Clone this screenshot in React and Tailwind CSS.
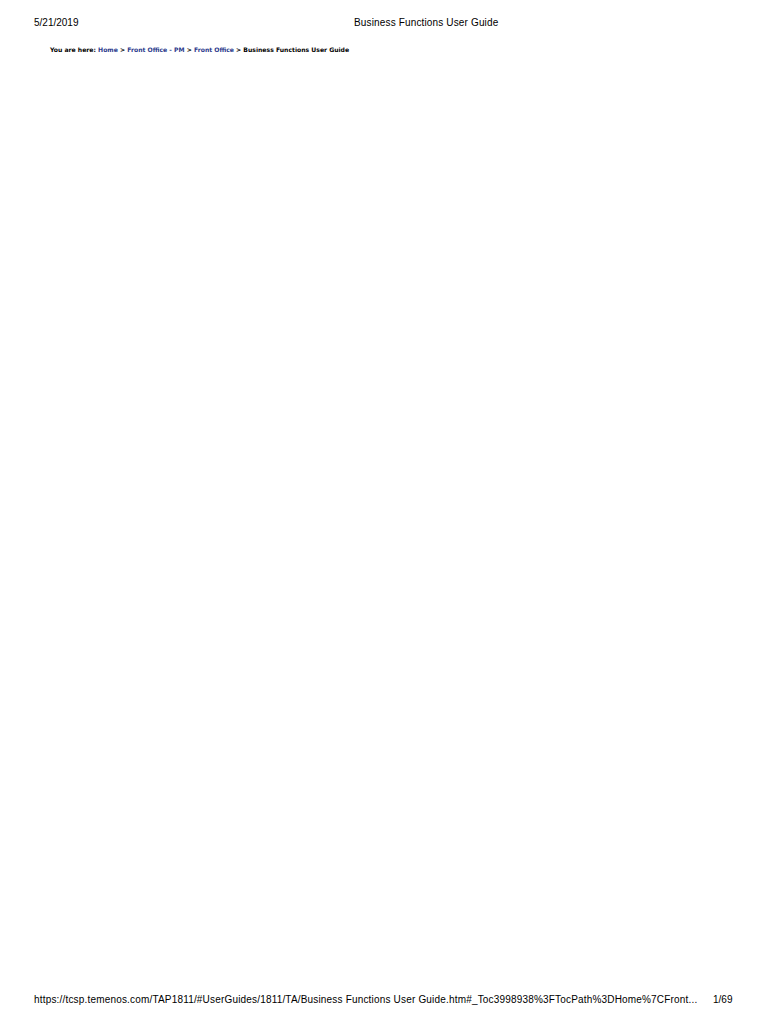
export default function App() {
  return (
    <div className="w-[768px] h-[1024px] bg-white relative flex flex-col" style={{ fontFamily: '"Liberation Sans", Arial, sans-serif' }}>
      <div className="flex h-[18px] mt-[14px] px-[34px] text-[10px] leading-[18px] text-black">
        <div className="w-[320px]">5/21/2019</div>
        <div className="tracking-[0.15px]">Business Functions User Guide</div>
      </div>
      <div className="mt-[13px] ml-[50px] text-[6.1px] leading-[10px] font-bold whitespace-nowrap" style={{ fontFamily: '"DejaVu Sans", Verdana, sans-serif' }}>
        <span className="text-black">You are here: </span>
        <span className="text-[#2b3a8c]">Home</span>
        <span className="text-black"> &gt; </span>
        <span className="text-[#2b3a8c]">Front Office - PM</span>
        <span className="text-black"> &gt; </span>
        <span className="text-[#2b3a8c]">Front Office</span>
        <span className="text-black"> &gt; Business Functions User Guide</span>
      </div>
      <div className="flex-1" />
      <div className="flex h-[18px] mb-[15px] px-[34px] text-[10px] leading-[18px] text-black">
        <div className="w-[679px] whitespace-nowrap tracking-[0.18px]">https://tcsp.temenos.com/TAP1811/#UserGuides/1811/TA/Business Functions User Guide.htm#_Toc3998938%3FTocPath%3DHome%7CFront...</div>
        <div>1/69</div>
      </div>
    </div>
  );
}
